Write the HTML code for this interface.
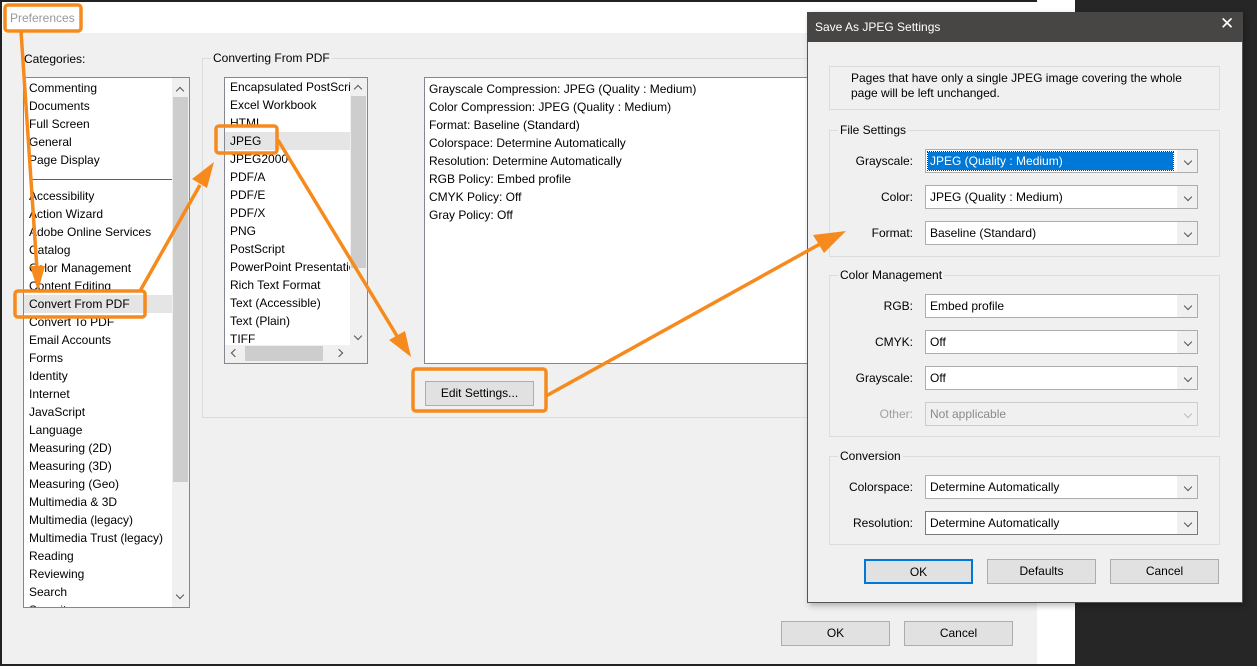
<!DOCTYPE html>
<html><head><style>
*{margin:0;padding:0;box-sizing:border-box}
body{width:1257px;height:666px;position:relative;overflow:hidden;background:#262626;font-family:"Liberation Sans",sans-serif;font-size:12px;color:#000}
.a{position:absolute}
.t{position:absolute;white-space:nowrap;line-height:14px}
.list div{height:18px;line-height:18px;padding-left:5px;white-space:nowrap;overflow:hidden}
.dd{position:absolute;height:24px;border:1px solid #adadad;background:#fff;padding-left:4px;line-height:22px;white-space:nowrap}
.dd::after{content:"";position:absolute;right:0;top:0;width:20px;height:22px;background:#f0f0f0}
.dd i{position:absolute;right:6px;top:8px;width:6px;height:6px;border-right:1px solid #555;border-bottom:1px solid #555;transform:rotate(45deg);z-index:2}
.lbl{position:absolute;text-align:right;width:90px;line-height:24px}
.grp{position:absolute;border:1px solid #dcdcdc}
.grp span{position:absolute;top:-8px;left:8px;background:#f0f0f0;padding:0 2px;line-height:14px}
.btn{position:absolute;height:25px;border:1px solid #adadad;background:#e1e1e1;text-align:center;line-height:23px}
.chev{position:absolute;width:6px;height:6px;border-left:1.5px solid #555;border-top:1.5px solid #555}
</style></head><body>
<div class="a" style="left:0;top:0;width:1075px;height:666px;background:#fff"></div>
<div class="a" style="left:0;top:0;width:1037px;height:664px;background:#f0f0f0;border-left:2px solid #222;border-top:2px solid #222"></div>
<div class="a" style="left:2px;top:2px;width:1035px;height:31px;background:#fff"></div>
<div class="a" style="left:0;top:664px;width:1075px;height:2px;background:#222"></div>
<div class="t" style="left:10px;top:11px;color:#999">Preferences</div>
<div class="t" style="left:24px;top:52px">Categories:</div>

<div class="a list" style="left:23px;top:77px;width:167px;height:531px;background:#fff;border:1px solid #828790;overflow:hidden;padding-top:1px">
<div>Commenting</div><div>Documents</div><div>Full Screen</div><div>General</div><div>Page Display</div>
<div style="height:18px;position:relative"><span class="a" style="left:7px;top:10px;width:141px;height:1px;background:#0078d7"></span></div>
<div>Accessibility</div><div>Action Wizard</div><div>Adobe Online Services</div><div>Catalog</div><div>Color Management</div><div>Content Editing</div>
<div style="background:#e5e5e5;width:148px">Convert From PDF</div><div>Convert To PDF</div><div>Email Accounts</div><div>Forms</div><div>Identity</div><div>Internet</div><div>JavaScript</div><div>Language</div><div>Measuring (2D)</div><div>Measuring (3D)</div><div>Measuring (Geo)</div><div>Multimedia &amp; 3D</div><div>Multimedia (legacy)</div><div>Multimedia Trust (legacy)</div><div>Reading</div><div>Reviewing</div><div>Search</div><div>Security</div>
</div>
<div class="a" style="left:172px;top:78px;width:17px;height:529px;background:#f0f0f0"></div>
<div class="a" style="left:173px;top:97px;width:15px;height:385px;background:#cdcdcd"></div>
<div class="chev" style="left:177px;top:88px;transform:rotate(45deg)"></div>
<div class="chev" style="left:177px;top:592px;transform:rotate(225deg)"></div>

<div class="grp" style="left:202px;top:58px;width:840px;height:360px"><span style="background:#f0f0f0">Converting From PDF</span></div>

<div class="a list" style="left:224px;top:77px;width:144px;height:287px;background:#fff;border:1px solid #828790;overflow:hidden;padding-top:0">
<div>Encapsulated PostScript</div><div>Excel Workbook</div><div>HTML</div><div style="background:#e5e5e5;width:125px">JPEG</div><div>JPEG2000</div><div>PDF/A</div><div>PDF/E</div><div>PDF/X</div><div>PNG</div><div>PostScript</div><div>PowerPoint Presentation</div><div>Rich Text Format</div><div>Text (Accessible)</div><div>Text (Plain)</div><div>TIFF</div>
</div>
<div class="a" style="left:350px;top:78px;width:17px;height:267px;background:#f0f0f0"></div>
<div class="a" style="left:351px;top:96px;width:15px;height:172px;background:#cdcdcd"></div>
<div class="a" style="left:225px;top:345px;width:142px;height:18px;background:#f0f0f0"></div>
<div class="a" style="left:245px;top:346px;width:78px;height:15px;background:#cdcdcd"></div>
<div class="chev" style="left:232px;top:350px;transform:rotate(-45deg)"></div>
<div class="chev" style="left:336px;top:350px;transform:rotate(135deg)"></div>
<div class="chev" style="left:355px;top:86px;transform:rotate(45deg)"></div>
<div class="chev" style="left:355px;top:333px;transform:rotate(225deg)"></div>

<div class="a" style="left:424px;top:77px;width:420px;height:287px;background:#fff;border:1px solid #828790;padding:2px 4px;line-height:18px">
Grayscale Compression: JPEG (Quality : Medium)<br>Color Compression: JPEG (Quality : Medium)<br>Format: Baseline (Standard)<br>Colorspace: Determine Automatically<br>Resolution: Determine Automatically<br>RGB Policy: Embed profile<br>CMYK Policy: Off<br>Gray Policy: Off</div>

<div class="btn" style="left:425px;top:381px;width:109px">Edit Settings...</div>
<div class="btn" style="left:781px;top:621px;width:109px">OK</div>
<div class="btn" style="left:904px;top:621px;width:109px">Cancel</div>

<div class="a" style="left:809px;top:14px;width:436px;height:592px;background:rgba(0,0,0,0.25);filter:blur(3px)"></div>
<div class="a" style="left:807px;top:12px;width:436px;height:591px;background:#f0f0f0;border:1px solid #555"></div>
<div class="a" style="left:807px;top:12px;width:436px;height:30px;background:#484644"></div>
<div class="t" style="left:815px;top:20px;color:#fff">Save As JPEG Settings</div>
<div class="t" style="left:1220px;top:17px;color:#fff;font-size:17px">&#x2715;</div>

<div class="a" style="left:829px;top:66px;width:391px;height:44px;border:1px solid #dcdcdc"></div>
<div class="t" style="left:851px;top:71px;line-height:15px">Pages that have only a single JPEG image covering the whole<br>page will be left unchanged.</div>

<div class="grp" style="left:829px;top:130px;width:391px;height:127px"><span>File Settings</span></div>
<div class="lbl" style="left:823px;top:149px">Grayscale:</div>
<div class="dd" style="left:925px;top:149px;width:273px"><span style="background:#0078d7;color:#fff;display:inline-block;width:245px;line-height:18px;margin-left:-2px;padding-left:2px;outline:1px dotted #333">JPEG (Quality : Medium)</span><i></i></div>
<div class="lbl" style="left:823px;top:185px">Color:</div>
<div class="dd" style="left:925px;top:185px;width:273px">JPEG (Quality : Medium)<i></i></div>
<div class="lbl" style="left:823px;top:221px">Format:</div>
<div class="dd" style="left:925px;top:221px;width:273px">Baseline (Standard)<i></i></div>

<div class="grp" style="left:829px;top:275px;width:391px;height:162px"><span>Color Management</span></div>
<div class="lbl" style="left:823px;top:294px">RGB:</div>
<div class="dd" style="left:925px;top:294px;width:273px">Embed profile<i></i></div>
<div class="lbl" style="left:823px;top:330px">CMYK:</div>
<div class="dd" style="left:925px;top:330px;width:273px">Off<i></i></div>
<div class="lbl" style="left:823px;top:366px">Grayscale:</div>
<div class="dd" style="left:925px;top:366px;width:273px">Off<i></i></div>
<div class="lbl" style="left:823px;top:402px;color:#a0a0a0">Other:</div>
<div class="dd" style="left:925px;top:402px;width:273px;background:#f0f0f0;border-color:#ccc;color:#8a8a8a">Not applicable<i style="border-color:#bbb"></i></div>

<div class="grp" style="left:829px;top:456px;width:391px;height:89px"><span>Conversion</span></div>
<div class="lbl" style="left:823px;top:475px">Colorspace:</div>
<div class="dd" style="left:925px;top:475px;width:273px">Determine Automatically<i></i></div>
<div class="lbl" style="left:823px;top:511px">Resolution:</div>
<div class="dd" style="left:925px;top:511px;width:273px;border-color:#7a7a7a">Determine Automatically<i style="z-index:2"></i></div>

<div class="btn" style="left:864px;top:559px;width:109px;border:2px solid #0078d7">OK</div>
<div class="btn" style="left:987px;top:559px;width:109px">Defaults</div>
<div class="btn" style="left:1110px;top:559px;width:109px">Cancel</div>

<svg class="a" style="left:0;top:0" width="1257" height="666">
<g fill="none" stroke="#f68a1c" stroke-width="3.5" stroke-linejoin="round">
<rect x="5" y="5" width="76" height="26" rx="3"/>
<rect x="15" y="291" width="130" height="26" rx="3"/>
<rect x="216" y="126" width="61" height="27" rx="3"/>
<rect x="413" y="369" width="133" height="42" rx="3"/>
<line x1="21" y1="31" x2="37" y2="270"/>
<line x1="140" y1="291" x2="200" y2="185"/>
<line x1="278" y1="140" x2="397" y2="336"/>
<line x1="546" y1="396" x2="820" y2="244"/>
</g>
<g fill="#f68a1c">
<polygon points="30,266 45,266 38,291"/>
<polygon points="192,179 207,188 214,162"/>
<polygon points="389,340 405,331 411,357"/>
<polygon points="813,235 824,253 846,231"/>
</g>
</svg>
</body></html>
